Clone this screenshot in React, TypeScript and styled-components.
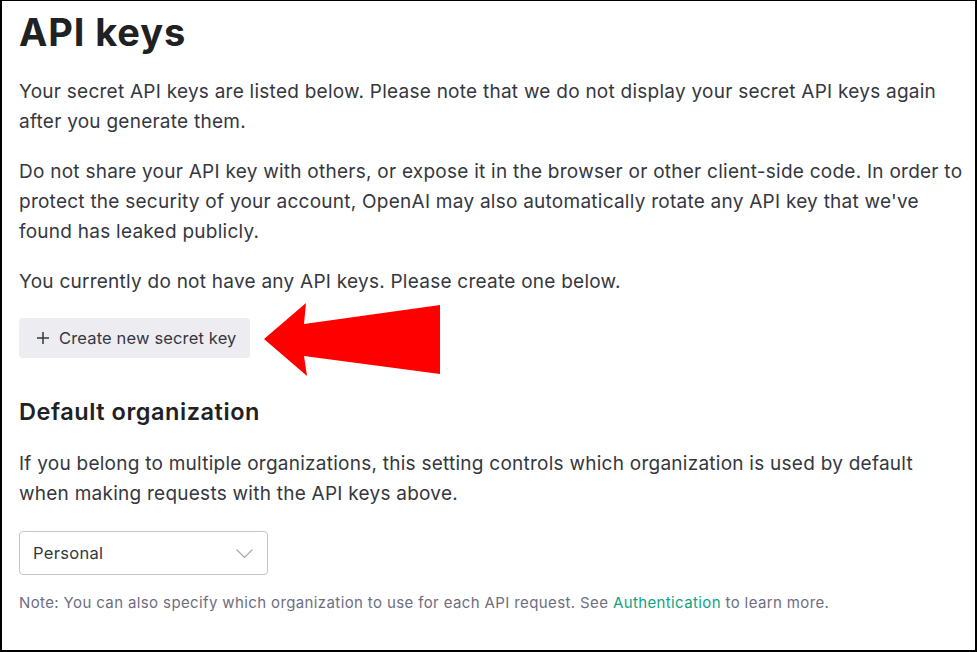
import styled, { createGlobalStyle } from "styled-components";

const Global = createGlobalStyle`
  html, body { margin: 0; padding: 0; background: #fff; }
  * { box-sizing: border-box; }
`;

const Frame = styled.div`
  position: relative;
  width: 977px;
  height: 652px;
  border: 1px solid #000;
  border-left-width: 2px;
  border-bottom-width: 2px;
  border-right-width: 2px;
  padding: 8px 10px 0 17px;
  font-family: Inter, "Noto Sans", sans-serif;
  color: #353740;
  overflow: hidden;
`;

const Title = styled.h1`
  margin: 0;
  font-size: 38px;
  line-height: 46px;
  font-weight: 700;
  color: #202123;
  letter-spacing: 0.9px;
`;

const Para = styled.p<{ $top?: number }>`
  margin: ${p => p.$top ?? 20}px 0 0;
  font-size: 19px;
  line-height: 30px;
  letter-spacing: 0.25px;
  white-space: nowrap;
  color: #353740;
`;

const KeyButton = styled.button`
  margin-top: 21px;
  display: inline-flex;
  align-items: center;
  gap: 10px;
  height: 40px;
  width: 231px;
  padding: 0 0 0 18px;
  border: none;
  border-radius: 4px;
  background: #ececf1;
  font-family: inherit;
  font-size: 16.5px;
  letter-spacing: 0.15px;
  color: #353740;
  cursor: pointer;
`;

const SubTitle = styled.h2`
  margin: 39px 0 0;
  font-size: 23.5px;
  line-height: 30px;
  font-weight: 600;
  letter-spacing: 0.55px;
  color: #202123;
`;

const Select = styled.div`
  margin-top: 22px;
  display: flex;
  align-items: center;
  justify-content: space-between;
  width: 249px;
  height: 44px;
  padding: 0 14px 0 13px;
  border: 1px solid #c5c5d2;
  border-radius: 4px;
  font-size: 16.5px;
  letter-spacing: 0.3px;
  color: #353740;
`;

const Note = styled.p`
  margin: 18px 0 0;
  font-size: 15px;
  line-height: 20px;
  letter-spacing: 0.38px;
  white-space: nowrap;
  color: #6e6e80;
`;

const Link = styled.a`
  color: #10a37f;
  text-decoration: none;
`;

const Arrow = styled.svg`
  position: absolute;
  left: 0;
  top: 0;
  pointer-events: none;
`;

export default function App() {
  return (
    <>
      <Global />
      <Frame>
        <Title>API keys</Title>
        <Para $top={22}>
          Your secret API keys are listed below. Please note that we do not display your secret API keys again
          <br />
          after you generate them.
        </Para>
        <Para>
          Do not share your API key with others, or expose it in the browser or other client-side code. In order to
          <br />
          protect the security of your account, OpenAI may also automatically rotate any API key that we've
          <br />
          found has leaked publicly.
        </Para>
        <Para>You currently do not have any API keys. Please create one below.</Para>
        <KeyButton>
          <svg width="12" height="12" viewBox="0 0 12 12" stroke="#353740" strokeWidth="1.5">
            <path d="M6 0v12M0 6h12" />
          </svg>
          Create new secret key
        </KeyButton>
        <SubTitle>Default organization</SubTitle>
        <Para $top={22}>
          If you belong to multiple organizations, this setting controls which organization is used by default
          <br />
          when making requests with the API keys above.
        </Para>
        <Select>
          <span>Personal</span>
          <svg width="17" height="9" viewBox="0 0 17 9" fill="none" stroke="#a9a9b8" strokeWidth="1.2">
            <path d="M0.5 0.5l8 8 8-8" />
          </svg>
        </Select>
        <Note>
          Note: You can also specify which organization to use for each API request. See{" "}
          <Link href="#">Authentication</Link> to learn more.
        </Note>
        <Arrow width="977" height="652" viewBox="0 0 977 652">
          <polygon
            points="262,338 304,302 302,323 438,304 438,373 302,355 305,375"
            fill="#ff0000"
          />
        </Arrow>
      </Frame>
    </>
  );
}
